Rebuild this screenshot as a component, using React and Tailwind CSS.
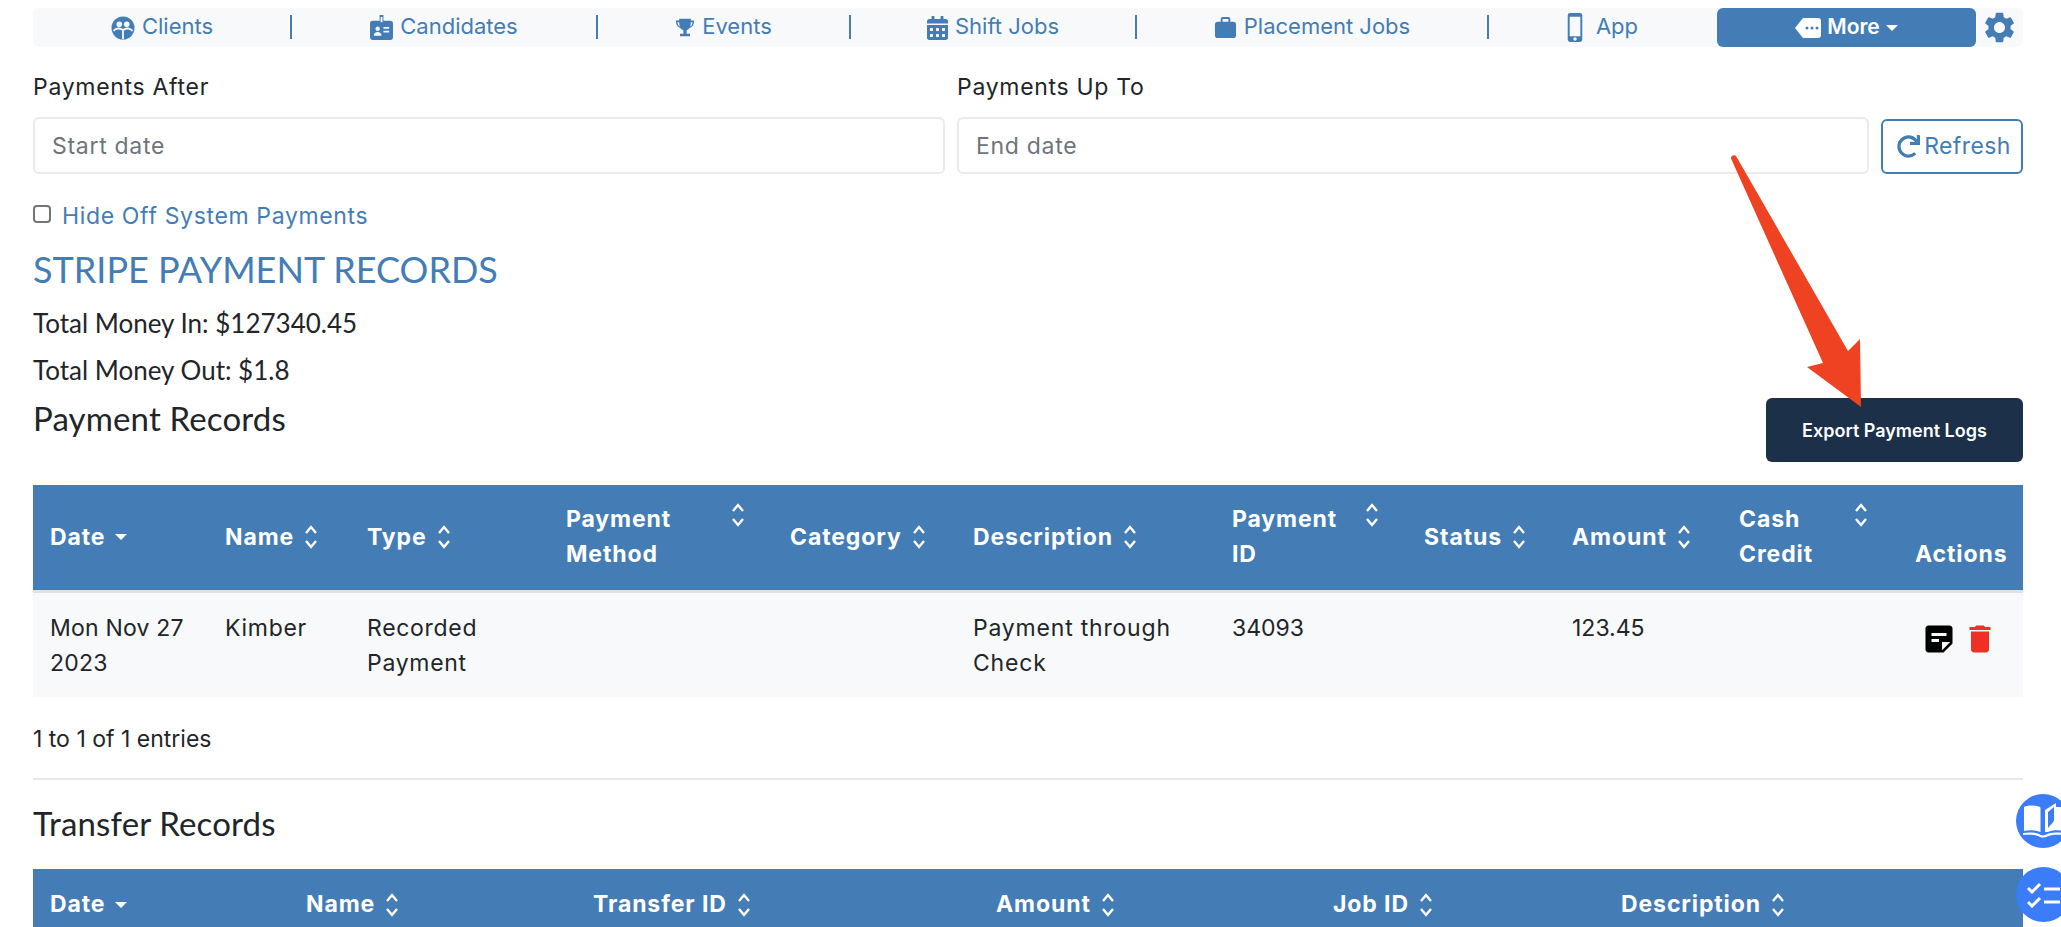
import React from "react";
import { FaCalendarAlt, FaRedo } from "react-icons/fa";
import { MdSettings, MdStickyNote2, MdDelete } from "react-icons/md";

const BODY_FONT = "font-['Inter','Liberation_Sans',sans-serif]";
const HEAD_FONT = "font-['Lato','Noto_Sans',sans-serif]";

const ClientsIcon = () => (
  <svg viewBox="0 0 24 24" className="w-[24px] h-[24px]">
    <circle cx="12" cy="12" r="11.500" fill="currentColor" />
    <circle cx="8.300" cy="8.300" r="2.800" fill="#f8f9fa" />
    <circle cx="15.700" cy="8.300" r="2.800" fill="#f8f9fa" />
    <path
      d="M2.500 15c1.700-2.600 5.500-3.200 8-1.700.9.600 2.100.600 3 0 2.500-1.500 6.300-.9 8 1.700M12 14v9"
      fill="none"
      stroke="#f8f9fa"
      strokeWidth="1.800"
    />
  </svg>
);

const BadgeIcon = () => (
  <svg viewBox="0 0 24 26" className="w-[23px] h-[25px]" fill="currentColor">
    <path
      fillRule="evenodd"
      d="M10 0h4v6h7a3 3 0 0 1 3 3v14a3 3 0 0 1-3 3H3a3 3 0 0 1-3-3V9a3 3 0 0 1 3-3h7V0zm1 2v5.500h2V2h-2zM8 12a2.300 2.300 0 1 0 0 4.600A2.300 2.300 0 0 0 8 12zm6 .500v1.800h6v-1.800h-6zm0 4v1.800h6v-1.800h-6zM4 21.500c0-2.200 1.800-3.700 4-3.700s4 1.500 4 3.700H4z"
    />
  </svg>
);

const TrophyIcon = () => (
  <svg viewBox="0 0 24 24" className="w-[20px] h-[24px]" fill="currentColor">
    <path d="M5 1h14v2h4c0 5-2 8-5.500 9-.8 1.200-2 2-3.500 2.300V19h4v3H6v-3h4v-4.700C8.500 14 7.300 13.200 6.500 12 3 11 1 8 1 3h4V1zM3 5c.2 2.600 1.200 4.400 2.800 5.300C5.300 8.800 5 7 5 5H3zm18 0h-2c0 2-.3 3.800-.8 5.300C19.800 9.400 20.800 7.600 21 5z" />
  </svg>
);

const BriefcaseIcon = () => (
  <svg viewBox="0 0 24 24" className="w-[23px] h-[25px]" fill="currentColor">
    <path d="M9 1h6a2 2 0 0 1 2 2v3h3a3 3 0 0 1 3 3v11a3 3 0 0 1-3 3H4a3 3 0 0 1-3-3V9a3 3 0 0 1 3-3h3V3a2 2 0 0 1 2-2zm0 2v3h6V3H9z" />
  </svg>
);

const PhoneIcon = () => (
  <svg viewBox="0 0 16 32" className="w-[16px] h-[31px]" fill="currentColor">
    <path
      fillRule="evenodd"
      d="M3 1h10a2.500 2.500 0 0 1 2.500 2.500v25A2.500 2.500 0 0 1 13 31H3a2.500 2.500 0 0 1-2.500-2.500v-25A2.500 2.500 0 0 1 3 1zm-.5 4v20h11V5h-11zM8 26a1.800 1.800 0 1 0 0 3.600A1.800 1.800 0 0 0 8 26z"
    />
  </svg>
);

const TagIcon = () => (
  <svg viewBox="0 0 26 20" className="w-[26px] h-[20px]" fill="currentColor">
    <path
      fillRule="evenodd"
      d="M8 0h15a3 3 0 0 1 3 3v14a3 3 0 0 1-3 3H8L0 10 8 0zm4 8.500a1.500 1.500 0 1 0 0 3 1.500 1.500 0 0 0 0-3zm5 0a1.500 1.500 0 1 0 0 3 1.500 1.500 0 0 0 0-3zm5 0a1.500 1.500 0 1 0 0 3 1.500 1.500 0 0 0 0-3z"
    />
  </svg>
);

const BookIcon = () => (
  <svg viewBox="0 0 40 36" className="w-[40px] h-[36px]" fill="white">
    <path d="M1 4c3-1.500 8-2 15-.500 1 .3 1.500 1 1.500 2V29C12 27 6 27 1 28V4z" />
    <path d="M22 7l11-7v4h3c2 0 3 .5 4 1v23c-5-1-11-1-15 1h-3V7zm3 2v16l6-7V4l-6 5z" />
    <path d="M0 30c6-1 13-1 18 2 1 .6 3 .6 4 0 5-3 12-3 18-2v2c-6-.6-12-.6-17 2-1.800.8-4.200.8-6 0-5-2.600-11-2.600-17-2v-2z" />
  </svg>
);

const ChecksIcon = () => (
  <svg viewBox="0 0 34 26" className="w-[34px] h-[26px]" fill="none" stroke="white" strokeWidth="3">
    <path d="M1 6l4 4 8-8M1 20l4 4 8-8M17 7h16M17 20h16" />
  </svg>
);

const SortIcon = () => (
  <svg viewBox="0 0 14 26" className="w-[14px] h-[26px] shrink-0" fill="none" stroke="white" strokeWidth="2.400">
    <path d="M2 9l5-6 5 6M2 17l5 6 5-6" />
  </svg>
);

const CaretIcon = () => (
  <svg viewBox="0 0 12 6" className="w-[12px] h-[6px] shrink-0" fill="currentColor">
    <path d="M0 0h12L6 6z" />
  </svg>
);

const navItems = [
  { label: "Clients", icon: <ClientsIcon />, width: "w-[258px]" },
  { label: "Candidates", icon: <BadgeIcon />, width: "w-[306px]" },
  { label: "Events", icon: <TrophyIcon />, width: "w-[253px]" },
  { label: "Shift Jobs", icon: <FaCalendarAlt className="w-[21px] h-[24px]" />, width: "w-[286px]" },
  { label: "Placement Jobs", icon: <BriefcaseIcon />, width: "w-[352px]" },
];

const paymentColumns = [
  { label: ["Date"], width: "w-[174px]", sorted: true },
  { label: ["Name"], width: "w-[142px]" },
  { label: ["Type"], width: "w-[199px]" },
  { label: ["Payment", "Method"], width: "w-[224px]", box: "w-[155px]" },
  { label: ["Category"], width: "w-[183px]" },
  { label: ["Description"], width: "w-[259px]" },
  { label: ["Payment", "ID"], width: "w-[192px]", box: "w-[123px]" },
  { label: ["Status"], width: "w-[148px]" },
  { label: ["Amount"], width: "w-[167px]" },
  { label: ["Cash", "Credit"], width: "w-[176px]", box: "w-[105px]" },
];

const transferColumns = [
  { label: ["Date"], width: "w-[255px]", sorted: true },
  { label: ["Name"], width: "w-[287px]" },
  { label: ["Transfer ID"], width: "w-[403px]" },
  { label: ["Amount"], width: "w-[337px]" },
  { label: ["Job ID"], width: "w-[288px]" },
  { label: ["Description"], width: "w-[420px]" },
];

const HeaderCell = ({ col }) => (
  <th className={`${col.width} ${col.sorted ? "pl-[17px]" : "pl-[18px]"} pr-[10px] text-left font-bold tracking-[0.9px] align-middle`}>
    <div className={`flex gap-[10px] ${col.box ? "items-start" : "items-center"}`}>
      <span className={`${col.box ? col.box : ""} whitespace-nowrap`}>
        {col.label.map((line) => (
          <span key={line} className="block">{line}</span>
        ))}
      </span>
      {col.sorted ? <CaretIcon /> : <SortIcon />}
    </div>
  </th>
);

const App = () => {
  return (
    <div className={`relative h-[927px] overflow-hidden bg-white pl-[33px] pr-[38px] pt-[8px] text-[23px] tracking-[0.4px] text-[#212529] ${BODY_FONT}`}>
      {/* top nav */}
      <div className="flex h-[39px] items-center rounded-[6px] bg-[#f8f9fa] text-[#447db5] w-[1990px]">
        {navItems.map((item) => (
          <div key={item.label} className={`${item.width} relative flex h-[39px] items-center justify-center gap-[7px] text-[22px] tracking-normal`}>
            {item.icon}
            <span className="pb-[2px]">{item.label}</span>
            <span className="absolute -right-[1px] top-[7px] h-[24px] w-[2px] bg-[#447db5]"></span>
          </div>
        ))}
        <div className="flex w-[229px] items-center justify-center gap-[13px] text-[22px] tracking-normal">
          <PhoneIcon />
          <span className="pb-[2px]">App</span>
        </div>
        <button className="flex h-[39px] w-[259px] items-center justify-center gap-[6px] rounded-[6px] bg-[#447db5] text-[21px] font-semibold tracking-normal text-white">
          <TagIcon />
          <span className="pb-[2px]">More</span>
          <CaretIcon />
        </button>
        <MdSettings className="ml-[5px] h-[37px] w-[37px]" />
      </div>

      {/* date filters */}
      <div className="mt-[25px] flex items-end gap-[12px] w-[1990px]">
        <div className="w-[912px]">
          <label className="block h-[45px] leading-[30px] tracking-[0.7px]">Payments After</label>
          <div className="flex h-[57px] items-center rounded-[6px] border-2 border-[#ebebeb] pl-[17px] pt-[2px] tracking-[0.7px] text-[#6c757d]">Start date</div>
        </div>
        <div className="w-[912px]">
          <label className="block h-[45px] leading-[30px] tracking-[0.7px]">Payments Up To</label>
          <div className="flex h-[57px] items-center rounded-[6px] border-2 border-[#ebebeb] pl-[17px] pt-[2px] tracking-[0.7px] text-[#6c757d]">End date</div>
        </div>
        <button className="flex h-[55px] w-[142px] items-center justify-center gap-[4px] rounded-[6px] border-2 border-[#447db5] pl-[4px] text-[#447db5]">
          <FaRedo className="h-[23px] w-[23px]" />
          <span>Refresh</span>
        </button>
      </div>

      <div className="mt-[28px] flex h-[28px] items-center gap-[11px] tracking-[0.65px] text-[#447db5]">
        <span className="h-[18px] w-[18px] -translate-y-[2px] rounded-[4px] border-2 border-[#757575] bg-white"></span>
        <span>Hide Off System Payments</span>
      </div>

      <h1 className={`mt-[16px] h-[46px] text-[36px] leading-[46px] tracking-normal text-[#447db5] ${HEAD_FONT}`}>STRIPE PAYMENT RECORDS</h1>
      <p className={`mt-[12px] h-[38px] text-[26px] leading-[38px] tracking-normal ${HEAD_FONT}`}>Total Money In: $127340.45</p>
      <p className={`mt-[9px] h-[38px] text-[26px] leading-[38px] tracking-normal ${HEAD_FONT}`}>Total Money Out: $1.8</p>

      {/* payment records */}
      <div className="flex w-[1990px] items-start justify-between">
        <h2 className={`mt-[9px] text-[33px] leading-[40px] tracking-[0.15px] ${HEAD_FONT}`}>Payment Records</h2>
        <button className="mt-[9px] h-[64px] w-[257px] rounded-[6px] bg-[#1c304a] text-[18px] font-semibold tracking-normal text-white">Export Payment Logs</button>
      </div>

      <table className="mt-[23px] w-[1990px] table-fixed border-collapse leading-[35px]">
        <thead>
          <tr className="h-[106px] bg-[#447db5] text-white">
            {paymentColumns.map((col) => (
              <HeaderCell key={col.label[0]} col={col} />
            ))}
            <th className="w-[126px] pl-[18px] pb-[18px] text-left align-bottom font-bold tracking-[0.9px]">Actions</th>
          </tr>
        </thead>
        <tbody>
          <tr className="h-[106px] border-t-[3px] border-[#dee2e6] bg-[#f8f9fa] align-top">
            <td className="pl-[17px] pr-[18px] pt-[18px] tracking-[0.2px]">Mon Nov 27 2023</td>
            <td className="pl-[18px] pt-[18px] tracking-[0.7px]">Kimber</td>
            <td className="pl-[18px] pt-[18px] tracking-[0.7px]">Recorded Payment</td>
            <td></td>
            <td></td>
            <td className="pl-[18px] pt-[18px] tracking-[0.8px]">Payment through Check</td>
            <td className="pl-[18px] pt-[18px] tracking-normal">34093</td>
            <td></td>
            <td className="pl-[18px] pt-[18px] tracking-normal">123.45</td>
            <td></td>
            <td className="pl-[24px] pt-[28px]">
              <div className="flex items-center gap-[5px]">
                <MdStickyNote2 className="h-[36px] w-[36px] shrink-0 text-black" />
                <MdDelete className="h-[36px] w-[36px] shrink-0 text-[#ee3124]" />
              </div>
            </td>
          </tr>
        </tbody>
      </table>

      <p className="mt-[26px] leading-[32px] tracking-normal">1 to 1 of 1 entries</p>
      <hr className="mt-[23px] w-[1990px] border-t-2 border-[#e9e9e9]" />
      <h2 className={`mt-[23px] text-[33px] leading-[40px] tracking-[0.15px] ${HEAD_FONT}`}>Transfer Records</h2>

      <table className="mt-[26px] w-[1990px] table-fixed border-collapse">
        <thead>
          <tr className="h-[71px] bg-[#447db5] text-white">
            {transferColumns.map((col) => (
              <HeaderCell key={col.label[0]} col={col} />
            ))}
          </tr>
        </thead>
      </table>

      {/* arrow annotation */}
      <svg className="absolute left-0 top-0 h-[927px] w-[2061px] pointer-events-none" viewBox="0 0 2061 927">
        <path d="M1731 158.500a3 3 0 0 1 5-2.500L1848 351l12-12 1 68-54-40 16-4z" fill="#ee4223" />
      </svg>

      {/* floating buttons */}
      <div className="absolute left-[2016px] top-[794px] flex h-[54px] w-[54px] items-center justify-center rounded-full bg-[#3b7df8]">
        <BookIcon />
      </div>
      <div className="absolute left-[2016px] top-[867px] flex h-[55px] w-[55px] items-center justify-center rounded-full bg-[#3b7df8]">
        <ChecksIcon />
      </div>
    </div>
  );
};

export default App;
